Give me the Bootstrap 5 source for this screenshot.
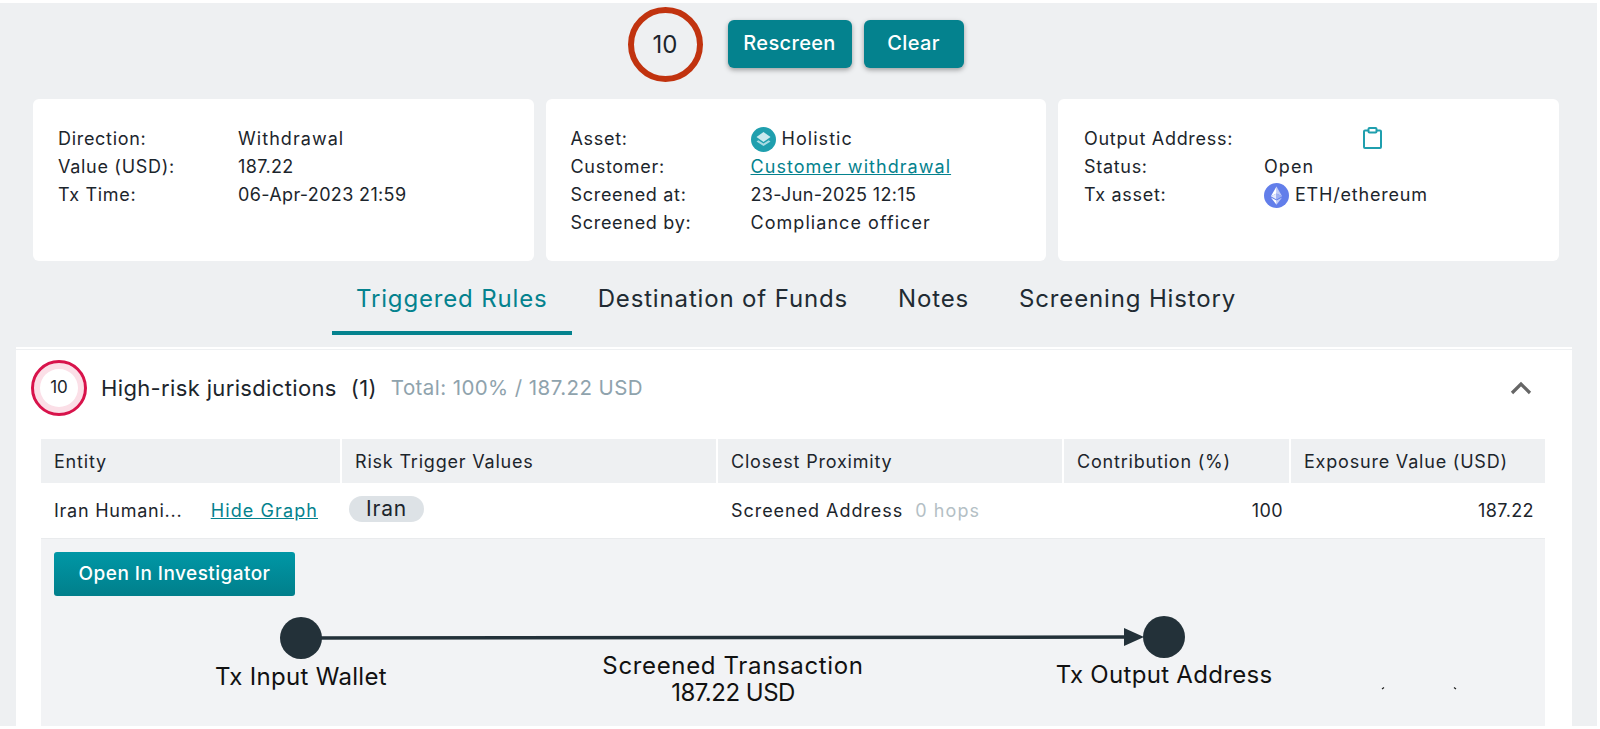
<!doctype html>
<html lang="en">
<head>
<meta charset="utf-8">
<title>Screening</title>
<link href="https://cdn.jsdelivr.net/npm/bootstrap@5.3.0/dist/css/bootstrap.min.css" rel="stylesheet">
<style>
html,body{height:100%;}
body{background:#fff;font-family:Inter,"Liberation Sans",sans-serif;color:#1c252c;font-size:18px;overflow:hidden;}
.shell{background:#eef0f2;margin:3px 3px 3px 0;height:723px;overflow:hidden;}
.score-head{height:96px;padding:4px 6px 0 0;gap:25px;}
.score-big{width:75px;height:75px;border:6px solid #c1330f;border-radius:50%;font-size:24px;}
.teal-btn{background:#04828e;color:#fff;border:0;border-radius:6px;height:48px;font-size:20px;font-weight:500;letter-spacing:.35px;box-shadow:0 2px 5px rgba(0,0,0,.35);padding:0 0 2px;margin-top:13px;}
.teal-btn:hover{background:#04828e;color:#fff;}
.btn-re{width:124px;}.btn-cl{width:100px;margin-left:-13px;}
.info-row{padding:0 0 0 33px;gap:12px;width:1559px;}
.info-box{background:#fff;border-radius:6px;height:162px;flex:0 0 500.5px;padding:26px 25px 0;line-height:28px;letter-spacing:.7px;}
.info-box:last-child{padding-left:26px;}
.info-box .lab{flex:0 0 180px;}
.info-box .val-num{letter-spacing:.35px;}
.info-box .val-word{letter-spacing:1.05px;}
.info-box .val-eth{letter-spacing:.8px;}
.clip-slot{padding-left:99px;margin-top:-2px;}
.asset-val{gap:6px;}
.teal-link{color:#04828e;text-decoration:underline;}
.tab-bar{height:74px;width:1592px;gap:2px;padding-top:9px;font-size:24px;letter-spacing:.85px;}
.tab-item{padding:0 24px;height:65px;line-height:58px;color:#212b33;border-bottom:4px solid transparent;}
.tab-item.on{color:#04828e;border-bottom-color:#04828e;}
.panel-edge{height:2px;background:#fff;width:1556px;margin:12px 0 1px 16px;}
.panel{background:#fff;width:1556px;margin-left:16px;height:376px;}
.rule-head{height:89px;padding:0 40px 14px 15px;}
.score-small{width:56px;height:56px;border:3px solid #d8134b;border-radius:50%;box-shadow:inset 0 0 0 6px #fbdfe7;font-size:17px;margin-right:14px;}
.rule-name{font-size:22px;letter-spacing:.35px;margin:2px 14px 0 0;}
.rule-total{font-size:20.500px;color:#8fa3ad;letter-spacing:.42px;margin-top:2px;}
.rule-table{width:1504px;margin-left:25px;table-layout:fixed;border-collapse:separate;border-spacing:0;}
.rule-table th{background:#eef0f2;font-weight:400;height:44px;padding:0 13px;border-right:2px solid #fff;font-size:18px;letter-spacing:.8px;}
.rule-table th:last-child{border-right:0;}
.rule-table td.cell{height:56px;padding:0 13px;border-bottom:1px solid #e9ebed;letter-spacing:.75px;}
.rule-table td.cell-ent{padding-right:24px;}
.rule-table td.cell-prox{padding-left:13px;letter-spacing:.95px;}
.rule-table td.cell-num{padding-right:8px;letter-spacing:.4px;}
.rule-table td.cell-exp{padding-right:11px;letter-spacing:.4px;}
.col-a{width:301px;}.col-b{width:376px;}.col-c{width:346px;}.col-d{width:227px;}.col-e{width:254px;}
.cell .teal-link{letter-spacing:1.1px;}
.pill{background:#dde2e6;border-radius:13px;display:inline-block;height:26px;line-height:25px;padding:0 17px;font-size:21px;letter-spacing:.8px;margin:-6px 0 0 -6px;vertical-align:middle;}
.hop{color:#b4bfc5;margin-left:6px;letter-spacing:1.1px;}
.graph-cell{background:#f2f3f5;padding:13px 0 0 13px;height:188px;vertical-align:top;}
.open-btn{background:linear-gradient(#0097a6,#017f8b);color:#fff;border:0;border-radius:3px;width:241px;height:44px;font-size:19px;font-weight:500;letter-spacing:.45px;padding:0;}
.open-btn:hover{color:#fff;background:linear-gradient(#0097a6,#017f8b);}
.graph-svg{display:block;margin-left:-13px;}
.graph-svg text{font-family:Inter,"Liberation Sans",sans-serif;font-size:24px;fill:#111;text-anchor:middle;letter-spacing:.3px;}
.graph-svg .wide-lab{letter-spacing:.65px;}
.graph-svg .tight-lab{letter-spacing:-.5px;}
</style>
</head>
<body>
<div class="shell">
  <div class="score-head d-flex justify-content-center align-items-start">
    <div class="score-big d-flex align-items-center justify-content-center">10</div>
    <button class="btn teal-btn btn-re">Rescreen</button>
    <button class="btn teal-btn btn-cl">Clear</button>
  </div>
  <div class="info-row d-flex">
    <div class="info-box">
      <div class="d-flex"><span class="lab">Direction:</span><span class="val-word">Withdrawal</span></div>
      <div class="d-flex"><span class="lab">Value (USD):</span><span class="val-num">187.22</span></div>
      <div class="d-flex"><span class="lab">Tx Time:</span><span class="val-num">06-Apr-2023 21:59</span></div>
    </div>
    <div class="info-box">
      <div class="d-flex"><span class="lab">Asset:</span><span class="d-flex align-items-center asset-val val-word">
        <svg width="25" height="25" viewBox="0 0 25 25"><circle cx="12.5" cy="12.5" r="12.5" fill="#1f9fae"/><path d="M5.5 14.5l7 4.500 7-4.500-1.800-1.200-5.200 3.300-5.200-3.300z" fill="#a9dbe2"/><path d="M12.5 5l7 5-7 5-7-5z" fill="#c9e9ee"/></svg>Holistic</span></div>
      <div class="d-flex"><span class="lab">Customer:</span><a href="#" class="teal-link val-word">Customer withdrawal</a></div>
      <div class="d-flex"><span class="lab">Screened at:</span><span class="val-num">23-Jun-2025 12:15</span></div>
      <div class="d-flex"><span class="lab">Screened by:</span><span class="val-word">Compliance officer</span></div>
    </div>
    <div class="info-box">
      <div class="d-flex"><span class="lab">Output Address:</span><span class="d-flex align-items-center clip-slot"><svg width="19" height="22" viewBox="0 0 19 22" fill="none" stroke="#1f9fae" stroke-width="2"><rect x="1" y="3.5" width="17" height="17.5" rx="1"/><rect x="5.5" y="1" width="8" height="4.5" rx="1" fill="#fff"/></svg></span></div>
      <div class="d-flex"><span class="lab">Status:</span><span class="val-word">Open</span></div>
      <div class="d-flex"><span class="lab">Tx asset:</span><span class="d-flex align-items-center asset-val val-eth">
        <svg width="25" height="25" viewBox="0 0 25 25"><circle cx="12.5" cy="12.5" r="12.5" fill="#627eea"/><path d="M12.5 3.5v7l5.600 2.800z" fill="#c1ccf7"/><path d="M12.5 3.5L6.900 13.300l5.600-2.800z" fill="#fff"/><path d="M12.5 10.500l-5.600 2.800 5.600 3.200z" fill="#e6eafc"/><path d="M12.5 10.500l5.600 2.800-5.600 3.200z" fill="#9fb0f2"/><path d="M12.5 17.600v4.200l5.600-7.400z" fill="#c1ccf7"/><path d="M12.5 17.600v4.200l-5.600-7.400z" fill="#fff"/></svg>ETH/ethereum</span></div>
    </div>
  </div>
  <div class="tab-bar d-flex justify-content-center">
    <div class="tab-item on">Triggered Rules</div>
    <div class="tab-item">Destination of Funds</div>
    <div class="tab-item">Notes</div>
    <div class="tab-item">Screening History</div>
  </div>
  <div class="panel-edge"></div>
  <div class="panel">
    <div class="rule-head d-flex align-items-center">
      <div class="score-small d-flex align-items-center justify-content-center">10</div>
      <span class="rule-name">High-risk jurisdictions</span><span class="rule-name">(1)</span><span class="rule-total">Total: 100% / 187.22 USD</span>
      <svg class="ms-auto" width="22" height="14" viewBox="0 0 22 14" fill="none" stroke="#666" stroke-width="3.2"><path d="M2 12l9-9 9 9"/></svg>
    </div>
    <table class="rule-table">
      <colgroup><col class="col-a"><col class="col-b"><col class="col-c"><col class="col-d"><col class="col-e"></colgroup>
      <thead><tr><th>Entity</th><th>Risk Trigger Values</th><th>Closest Proximity</th><th>Contribution (%)</th><th>Exposure Value (USD)</th></tr></thead>
      <tbody>
        <tr>
          <td class="cell cell-ent"><div class="d-flex justify-content-between"><span>Iran Humani...</span><a href="#" class="teal-link">Hide Graph</a></div></td>
          <td class="cell"><span class="pill">Iran</span></td>
          <td class="cell cell-prox">Screened Address <span class="hop">0 hops</span></td>
          <td class="cell cell-num text-end">100</td>
          <td class="cell cell-exp text-end">187.22</td>
        </tr>
        <tr><td colspan="5" class="graph-cell">
          <button class="btn open-btn">Open In Investigator</button>
          <svg class="graph-svg" width="1504" height="128" viewBox="0 0 1504 128">
            <line x1="270" y1="42" x2="1090" y2="41" stroke="#233139" stroke-width="3.5"/>
            <polygon points="1083,32 1103,41 1083,50" fill="#233139"/>
            <circle cx="260" cy="42" r="21" fill="#233139"/>
            <circle cx="1123" cy="41" r="21" fill="#233139"/>
            <text x="260" y="89">Tx Input Wallet</text>
            <text x="692" y="78" class="wide-lab">Screened Transaction</text>
            <text x="692" y="105" class="tight-lab">187.22 USD</text>
            <text x="1123" y="87">Tx Output Address</text>
            <path d="M1341 93l2-1.500M1413 91.500l2 1.500" stroke="#222" stroke-width="1.200"/>
          </svg>
        </td></tr>
      </tbody>
    </table>
  </div>
</div>
<script src="https://cdn.jsdelivr.net/npm/bootstrap@5.3.0/dist/js/bootstrap.bundle.min.js"></script>
</body>
</html>
